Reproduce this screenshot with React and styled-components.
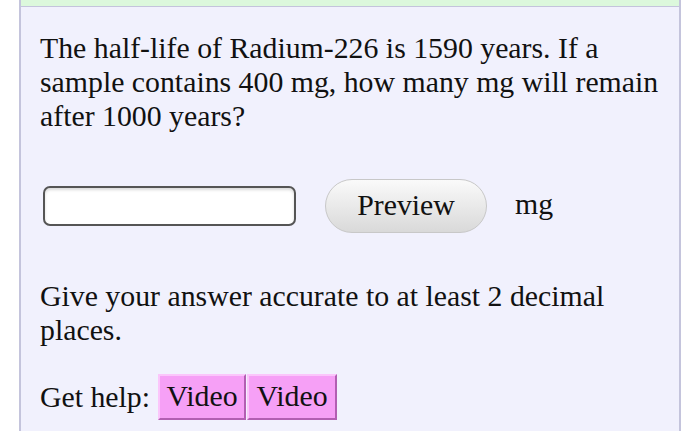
import styled, { createGlobalStyle } from "styled-components";

const GlobalStyle = createGlobalStyle`
  html, body {
    margin: 0;
    padding: 0;
    background: #ffffff;
  }
  body {
    font-family: "Liberation Serif", "Times New Roman", serif;
  }
`;

const Page = styled.div`
  width: 700px;
  height: 434px;
  overflow: hidden;
  padding: 0 19px 0 19px;
  box-sizing: border-box;
`;

const TopBar = styled.div`
  height: 6px;
  background: #dcf8dc;
  border-left: 2px solid #c4c4dc;
  border-right: 2px solid #c4c4dc;
  border-bottom: 1px solid #c4c4dc;
`;

const Panel = styled.div`
  background: #f1f1fd;
  border-left: 2px solid #c4c4dc;
  border-right: 2px solid #c4c4dc;
  height: 424px;
  padding: 24px 8px 0 19px;
  box-sizing: border-box;
  color: #111;
  font-size: 29.8px;
  line-height: 34px;
`;

const Text = styled.p`
  margin: 0 0 ${props => props.gap || 0}px;
`;

const AnswerRow = styled.div`
  display: flex;
  align-items: center;
  height: 54px;
  margin-bottom: 46px;
`;

const Input = styled.input`
  width: 253px;
  height: 40px;
  box-sizing: border-box;
  margin-left: 3px;
  border: 2px solid #555;
  border-radius: 7px;
  background: #fff;
  box-shadow: inset 0 2px 3px rgba(0, 0, 0, 0.15);
  outline: none;
`;

const PreviewButton = styled.button`
  width: 162px;
  height: 54px;
  margin-left: 29px;
  border: 1px solid #c8c8c8;
  border-radius: 27px;
  background: linear-gradient(#fafafa, #d9d9d9);
  font-family: inherit;
  font-size: 29.8px;
  color: #111;
  padding: 0 0 2px;
`;

const Unit = styled.span`
  margin-left: 28px;
  margin-bottom: 4px;
`;

const HelpRow = styled.div`
  display: flex;
  align-items: center;
`;

const HelpLabel = styled.span`
  margin-right: 8px;
`;

const VideoButton = styled.button`
  width: ${props => props.w}px;
  height: 46px;
  margin-right: 1px;
  background: #f6a0f6;
  border: 2px solid;
  border-color: #fbc6fb #b25fb2 #b25fb2 #fbc6fb;
  font-family: inherit;
  font-size: 29.8px;
  color: #111;
  padding: 0 0 2px;
`;

export default function App() {
  return (
    <Page>
      <GlobalStyle />
      <TopBar />
      <Panel>
        <Text gap={46}>
          The half-life of Radium-226 is 1590 years. If a sample contains 400 mg, how many mg will remain after 1000 years?
        </Text>
        <AnswerRow>
          <Input type="text" />
          <PreviewButton>Preview</PreviewButton>
          <Unit>mg</Unit>
        </AnswerRow>
        <Text gap={27}>
          Give your answer accurate to at least 2 decimal places.
        </Text>
        <HelpRow>
          <HelpLabel>Get help:</HelpLabel>
          <VideoButton w={88}>Video</VideoButton>
          <VideoButton w={90}>Video</VideoButton>
        </HelpRow>
      </Panel>
    </Page>
  );
}
